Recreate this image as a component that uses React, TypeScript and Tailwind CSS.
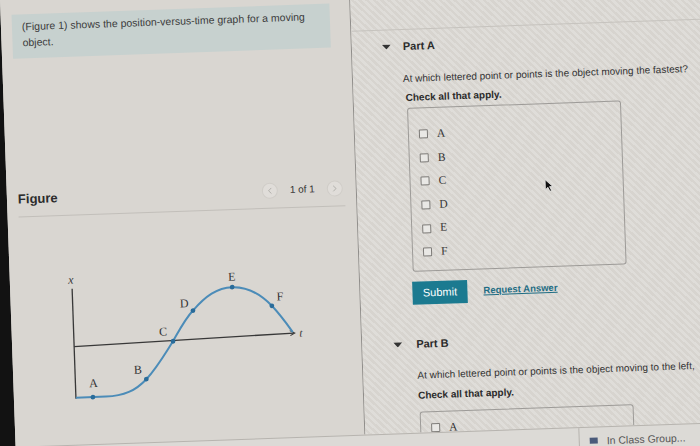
import React from "react";
import { ChevronLeft, ChevronRight } from "lucide-react";

const letters = ["A", "B", "C", "D", "E", "F"];

const Caret = () => (
  <svg width="9" height="5" viewBox="0 0 9 5">
    <path d="M0 0h9L4.5 5z" fill="#333" />
  </svg>
);

const Choice: React.FC<{ label: string }> = ({ label }) => (
  <div className="flex h-[23.6px] items-center gap-[9px] pl-[10px]">
    <span className="h-[9px] w-[9px] rounded-[1px] border border-[#7d7b78] bg-[#e9e8e5]" />
    <span className="font-['Liberation_Serif',serif] text-[11.5px] leading-none text-[#333]">
      {label}
    </span>
  </div>
);

// position-versus-time drawing, coordinates are page coordinates
const Graph = () => (
  <svg
    className="ml-[42px] mt-[54px]"
    width="260"
    height="140"
    viewBox="50 260 260 140"
  >
    <g fill="#333" fontFamily="'Liberation Serif', serif" fontSize="12" textAnchor="middle">
      <text x="69" y="274" fontStyle="italic">x</text>
      <text x="297" y="335" fontStyle="italic" fontSize="11">t</text>
      <text x="88" y="378">A</text>
      <text x="133" y="366">B</text>
      <text x="159.5" y="329">C</text>
      <text x="181.5" y="301.5">D</text>
      <text x="230" y="276.5">E</text>
      <text x="277.5" y="298">F</text>
    </g>
    <g stroke="#383838" strokeWidth="1.3" fill="none">
      <line x1="70" y1="279" x2="70" y2="389" />
      <line x1="70" y1="337" x2="290" y2="331" />
    </g>
    <path d="M286 328.5L291 331L286.5 333.5" stroke="#383838" strokeWidth="1" fill="none" />
    <path
      d="M70 388 L100 388 C118 388 130 383 141 372 C152 361 160 348 169 335 C177 322 182 313 190 305 C203 291 215 283 230 283 C245 283 259 292 269 303 C277 312 283 321 289 330"
      stroke="#4c8cb8"
      strokeWidth="2"
      fill="none"
    />
    <g fill="#2a6c9a">
      <circle cx="87" cy="388" r="2.4" />
      <circle cx="141" cy="372" r="2.4" />
      <circle cx="169" cy="335" r="2.4" />
      <circle cx="190" cy="305" r="2.4" />
      <circle cx="230" cy="283" r="2.4" />
      <circle cx="269" cy="303" r="2.4" />
    </g>
  </svg>
);

export default function App() {
  return (
    <div className="h-[446px] w-[700px] overflow-hidden bg-[#d9d6d1] font-['Liberation_Sans',Arial,sans-serif] text-[#333]">
      {/* the photo is taken at a slight angle */}
      <div className="-ml-[30px] -mt-[37px] flex h-[520px] w-[760px] -rotate-2 flex-col">
        <div className="flex h-[472px]">
          <div className="w-[38px] shrink-0 bg-[#121212]" />

          <div className="w-[350px] shrink-0 overflow-hidden border-r border-[#8f8d8a] bg-[#d9d6d1] pt-[37px]">
            <p className="ml-[11px] mt-[3px] h-[44px] w-[318px] bg-[#c7d1cf] px-[10px] pt-[4px] text-[10.5px] leading-[16px] text-[#3b3b3b]">
              (Figure 1) shows the position-versus-time graph for a moving
              object.
            </p>

            <div className="ml-[11px] mt-[133px] flex w-[327px] items-center justify-between border-b border-[#c2bfba] pb-[9px]">
              <span className="text-[13px] font-bold leading-[16px] text-[#2b2b2b]">
                Figure
              </span>
              <div className="flex items-center gap-[12px] pr-[2px]">
                <span className="flex h-[16px] w-[16px] items-center justify-center rounded-full border border-[#d0cdc8] bg-[#e0ddd9] text-[#aaa8a4]">
                  <ChevronLeft size={10} />
                </span>
                <span className="text-[10px] leading-[16px] text-[#333]">1 of 1</span>
                <span className="flex h-[16px] w-[16px] items-center justify-center rounded-full border border-[#d0cdc8] bg-[#e0ddd9] text-[#aaa8a4]">
                  <ChevronRight size={10} />
                </span>
              </div>
            </div>

            <Graph />
          </div>

          <div className="flex-1 overflow-hidden bg-[repeating-linear-gradient(45deg,#dfddd9_0px,#dfddd9_2.5px,#d7d4cf_2.5px,#d7d4cf_5px)] pt-[37px]">
            <div className="mt-[31px] border-t border-[#c6c3be]" />

            <div className="ml-[30px] mt-[8px] flex h-[16px] items-center gap-[12px]">
              <Caret />
              <span className="text-[11px] font-bold text-[#2b2b2b]">Part A</span>
            </div>
            <p className="ml-[50px] mt-[18px] whitespace-nowrap text-[10px] leading-[14px]">
              At which lettered point or points is the object moving the fastest?
            </p>
            <p className="ml-[52px] mt-[5px] text-[10px] font-bold leading-[14px] text-[#2b2b2b]">
              Check all that apply.
            </p>
            <div className="relative ml-[53px] mt-[3px] h-[164px] w-[214px] rounded-[3px] border border-[#9d9b98] pt-[14px]">
              {letters.map((l) => (
                <Choice key={l} label={l} />
              ))}
              <svg className="absolute left-[134px] top-[75px]" width="9" height="13" viewBox="0 0 9 13">
                <path
                  d="M0.5 0.5L0.5 10.5L3 8.2L5 12.3L6.6 11.6L4.7 7.6L8 7.6Z"
                  fill="#111"
                  stroke="#f2f2f2"
                  strokeWidth="0.7"
                />
              </svg>
            </div>

            <div className="ml-[52px] mt-[10px] flex items-center gap-[16px]">
              <button className="flex h-[23px] w-[55px] items-center justify-center bg-[#1b7a90] text-[11px] text-white">
                Submit
              </button>
              <span className="text-[9.5px] font-bold text-[#1f6d84] underline">
                Request Answer
              </span>
            </div>

            <div className="ml-[31px] mt-[31px] flex h-[16px] items-center gap-[14px]">
              <Caret />
              <span className="text-[11px] font-bold text-[#2b2b2b]">Part B</span>
            </div>
            <p className="ml-[54px] mt-[17px] whitespace-nowrap text-[10px] leading-[14px]">
              At which lettered point or points is the object moving to the left,
            </p>
            <p className="ml-[54px] mt-[6px] text-[10px] font-bold leading-[14px] text-[#2b2b2b]">
              Check all that apply.
            </p>
            <div className="ml-[55px] mt-[9px] h-[40px] w-[214px] rounded-[3px] border border-[#9d9b98] pt-[4px]">
              <Choice label="A" />
            </div>
          </div>
        </div>

        <div className="flex flex-1 border-t border-[#b7b4af] bg-[#dcdad6]">
          <div className="w-[602px] shrink-0 border-r border-[#b7b4af]" />
          <div className="flex items-start gap-[9px] pl-[10px] pt-[6px]">
            <span className="mt-[4px] h-[6px] w-[8px] bg-[#4a5a7a]" />
            <span className="text-[10.5px] leading-[14px] text-[#555]">In Class Group...</span>
          </div>
        </div>
      </div>
    </div>
  );
}
